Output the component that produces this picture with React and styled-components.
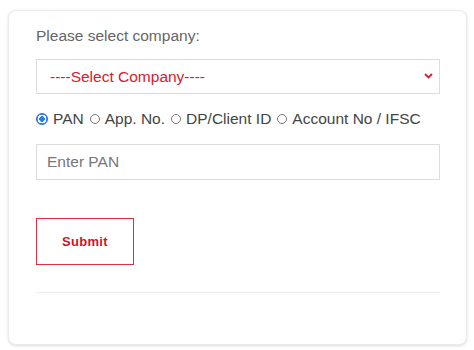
import styled, { createGlobalStyle } from 'styled-components';

const GlobalStyle = createGlobalStyle`
  body {
    margin: 0;
    background: #fff;
    font-family: "Liberation Sans", Arial, sans-serif;
  }
`;

const Page = styled.div`
  padding: 10px 7px 5px 8px;
`;

const Card = styled.form`
  background: #fff;
  border: 1px solid #ececec;
  border-radius: 8px;
  box-shadow: 0 1px 3px rgba(0, 0, 0, 0.14);
  padding: 15px 26px 52px 27px;
  height: 335px;
  box-sizing: border-box;
`;

const Label = styled.p`
  margin: 0 0 13px;
  font-size: 15.5px;
  line-height: 20px;
  color: #666;
`;

const SelectWrap = styled.div`
  position: relative;
`;

const Select = styled.select`
  appearance: none;
  width: 100%;
  height: 35px;
  border: 1px solid #dcdcdc;
  border-radius: 0;
  background: #fff;
  padding: 0 30px 0 13px;
  font-family: inherit;
  font-size: 15.5px;
  color: #d3202f;
  outline: none;
`;

const Chevron = styled.svg`
  position: absolute;
  right: 7px;
  top: 14px;
  pointer-events: none;
`;

const RadioRow = styled.div`
  display: flex;
  align-items: center;
  margin: 15px 0 15px;
  font-size: 15.5px;
  color: #444;
  height: 20px;
`;

const Option = styled.label`
  display: flex;
  align-items: center;
  margin-right: 5px;
`;

const Dot = styled.span`
  width: ${(p) => (p.$checked ? 12 : 10)}px;
  height: ${(p) => (p.$checked ? 12 : 10)}px;
  box-sizing: border-box;
  border-radius: 50%;
  margin: 0 5px 0 ${(p) => (p.$checked ? 0 : 1)}px;
  border: ${(p) => (p.$checked ? '1px solid #1f6fe0' : '1px solid #777')};
  background: ${(p) =>
    p.$checked ? 'radial-gradient(circle, #2a7cf4 0 38%, #fff 42% 60%, #2a7cf4 65%)' : '#fff'};
`;

const Input = styled.input`
  display: block;
  width: 100%;
  height: 36px;
  box-sizing: border-box;
  border: 1px solid #dcdcdc;
  padding: 0 10px;
  font-family: inherit;
  font-size: 15.5px;
  outline: none;
  &::placeholder {
    color: #777;
  }
`;

const Button = styled.button`
  display: block;
  margin-top: 38px;
  width: 98px;
  height: 47px;
  background: #fff;
  border: 1px solid #e0303f;
  color: #cc1425;
  font-family: inherit;
  font-weight: bold;
  font-size: 13px;
  letter-spacing: 0.3px;
`;

const Rule = styled.hr`
  margin: 27px 0 0;
  border: 0;
  border-top: 1px solid #ededed;
`;

const options = ['PAN', 'App. No.', 'DP/Client ID', 'Account No / IFSC'];

export default function App() {
  return (
    <>
      <GlobalStyle />
      <Page>
        <Card onSubmit={(e) => e.preventDefault()}>
          <Label>Please select company:</Label>
          <SelectWrap>
            <Select defaultValue="">
              <option value="">----Select Company----</option>
            </Select>
            <Chevron width="9" height="6" viewBox="0 0 9 6">
              <path d="M1 1l3.5 3.5L8 1" fill="none" stroke="#d3202f" strokeWidth="1.8" />
            </Chevron>
          </SelectWrap>
          <RadioRow>
            {options.map((o, i) => (
              <Option key={o}>
                <Dot $checked={i === 0} />
                {o}
              </Option>
            ))}
          </RadioRow>
          <Input placeholder="Enter PAN" />
          <Button type="submit">Submit</Button>
          <Rule />
        </Card>
      </Page>
    </>
  );
}
